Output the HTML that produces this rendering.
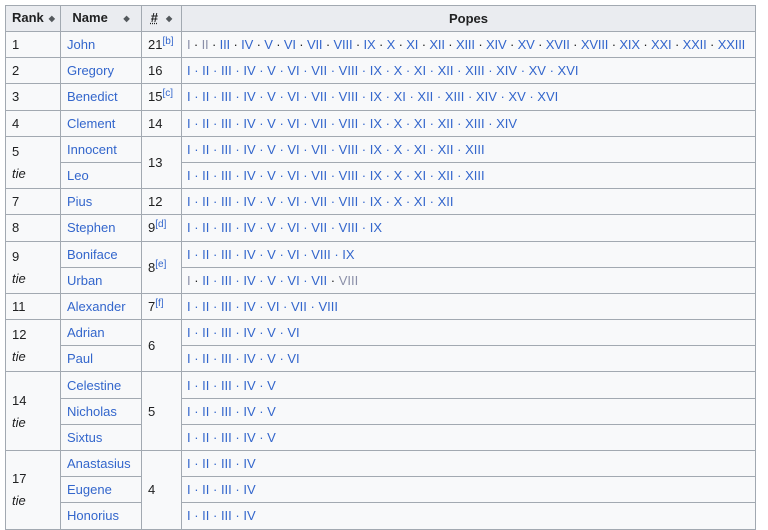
<!DOCTYPE html>
<html><head><meta charset="utf-8"><style>
html,body{margin:0;padding:0;background:#fff;width:768px;height:518px;overflow:hidden}
body{font-family:"Liberation Sans",Arial,sans-serif;font-size:13px;color:#202122}
table{position:absolute;left:5px;top:5px;border-collapse:collapse;background:#f8f9fa;width:751px;table-layout:fixed}
th,td{border:1px solid #a2a9b1;padding:0 6px;vertical-align:middle;text-align:left;line-height:15px;white-space:nowrap;overflow:hidden}
tr{height:26.2px}
tr.h{height:26px}
th{background:#eaecf0;font-weight:bold;text-align:center}
a{color:#3366cc;text-decoration:none}
.g{color:#8a8fa8}
sup{font-size:10px;color:#3366cc;vertical-align:5px;line-height:0}
i{display:block;margin-top:7px}
.s{font-size:8px;color:#54595d;margin-left:5px;position:relative;top:-1px}
td.p{padding-left:5px}
</style></head><body>
<table>
<colgroup><col style="width:55px"><col style="width:81px"><col style="width:40px"><col></colgroup>
<tr class="h"><th>Rank<span class="s">◆</span></th><th>Name <span class="s" style="margin-left:12px">◆</span></th><th><u style="text-decoration:underline dotted">#</u><span class="s" style="margin-left:8px">◆</span></th><th>Popes</th></tr>
<tr><td>1</td><td><a>John</a></td><td>21<sup>[b]</sup></td><td class="p" style="letter-spacing:-0.15px"><a class="g">I</a> · <a class="g">II</a> · <a>III</a> · <a>IV</a> · <a>V</a> · <a>VI</a> · <a>VII</a> · <a>VIII</a> · <a>IX</a> · <a>X</a> · <a>XI</a> · <a>XII</a> · <a>XIII</a> · <a>XIV</a> · <a>XV</a> · <a>XVII</a> · <a>XVIII</a> · <a>XIX</a> · <a>XXI</a> · <a>XXII</a> · <a>XXIII</a></td></tr>
<tr><td>2</td><td><a>Gregory</a></td><td>16</td><td class="p"><a>I · II · III · IV · V · VI · VII · VIII · IX · X · XI · XII · XIII · XIV · XV · XVI</a></td></tr>
<tr><td>3</td><td><a>Benedict</a></td><td>15<sup>[c]</sup></td><td class="p"><a>I · II · III · IV · V · VI · VII · VIII · IX · XI · XII · XIII · XIV · XV · XVI</a></td></tr>
<tr><td>4</td><td><a>Clement</a></td><td>14</td><td class="p"><a>I · II · III · IV · V · VI · VII · VIII · IX · X · XI · XII · XIII · XIV</a></td></tr>
<tr><td rowspan="2">5<i>tie</i></td><td><a>Innocent</a></td><td rowspan="2">13</td><td class="p"><a>I · II · III · IV · V · VI · VII · VIII · IX · X · XI · XII · XIII</a></td></tr>
<tr><td><a>Leo</a></td><td class="p"><a>I · II · III · IV · V · VI · VII · VIII · IX · X · XI · XII · XIII</a></td></tr>
<tr><td>7</td><td><a>Pius</a></td><td>12</td><td class="p"><a>I · II · III · IV · V · VI · VII · VIII · IX · X · XI · XII</a></td></tr>
<tr><td>8</td><td><a>Stephen</a></td><td>9<sup>[d]</sup></td><td class="p"><a>I · II · III · IV · V · VI · VII · VIII · IX</a></td></tr>
<tr><td rowspan="2">9<i>tie</i></td><td><a>Boniface</a></td><td rowspan="2">8<sup>[e]</sup></td><td class="p"><a>I · II · III · IV · V · VI · VIII · IX</a></td></tr>
<tr><td><a>Urban</a></td><td class="p"><a class="g">I</a> · <a>II · III · IV · V · VI · VII</a> · <a class="g">VIII</a></td></tr>
<tr><td>11</td><td><a>Alexander</a></td><td>7<sup>[f]</sup></td><td class="p"><a>I · II · III · IV · VI · VII · VIII</a></td></tr>
<tr><td rowspan="2">12<i>tie</i></td><td><a>Adrian</a></td><td rowspan="2">6</td><td class="p"><a>I · II · III · IV · V · VI</a></td></tr>
<tr><td><a>Paul</a></td><td class="p"><a>I · II · III · IV · V · VI</a></td></tr>
<tr><td rowspan="3">14<i>tie</i></td><td><a>Celestine</a></td><td rowspan="3">5</td><td class="p"><a>I · II · III · IV · V</a></td></tr>
<tr><td><a>Nicholas</a></td><td class="p"><a>I · II · III · IV · V</a></td></tr>
<tr><td><a>Sixtus</a></td><td class="p"><a>I · II · III · IV · V</a></td></tr>
<tr><td rowspan="3">17<i>tie</i></td><td><a>Anastasius</a></td><td rowspan="3">4</td><td class="p"><a>I · II · III · IV</a></td></tr>
<tr><td><a>Eugene</a></td><td class="p"><a>I · II · III · IV</a></td></tr>
<tr><td><a>Honorius</a></td><td class="p"><a>I · II · III · IV</a></td></tr>
</table>
</body></html>
